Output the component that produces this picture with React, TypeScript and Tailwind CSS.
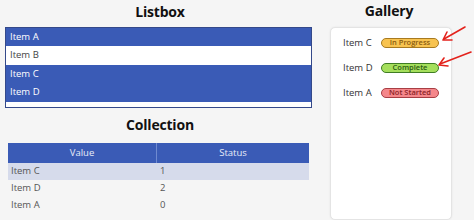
import React from "react";

const listItems = [
  { label: "Item A", sel: true, h: "h-[18px]" },
  { label: "Item B", sel: false, h: "h-[19px]" },
  { label: "Item C", sel: true, h: "h-[18px]" },
  { label: "Item D", sel: true, h: "h-[19px]" },
];

const rows = [
  { v: "Item C", s: "1", bg: "bg-[#d6dbeb]" },
  { v: "Item D", s: "2", bg: "" },
  { v: "Item A", s: "0", bg: "" },
];

const gallery = [
  {
    label: "Item C",
    status: "In Progress",
    cls: "bg-[#f8c350] border-[#a87a20] text-[#8a5c10]",
  },
  {
    label: "Item D",
    status: "Complete",
    cls: "bg-[#a5df5c] border-[#3f7d24] text-[#2c5a12]",
  },
  {
    label: "Item A",
    status: "Not Started",
    cls: "bg-[#f5878b] border-[#a83e44] text-[#8c2327]",
  },
];

export default function App() {
  return (
    <div className="relative w-[474px] h-[220px] overflow-hidden bg-[#f5f5f5] flex font-['Open_Sans',sans-serif]">
      <div className="w-[320px] flex flex-col">
        <div className="h-[27px] pb-[5px] flex items-center justify-center text-[14px] font-bold text-[#111] tracking-[-0.2px]">
          Listbox
        </div>
        <div className="ml-[5px] w-[307px] border border-[#34498a] bg-white flex flex-col">
          {listItems.map((it) => (
            <div
              key={it.label}
              className={`${it.h} flex items-center pl-[4px] text-[9.5px] ${
                it.sel ? "bg-[#3a5bb6] text-white" : "bg-white text-[#444]"
              }`}
            >
              {it.label}
            </div>
          ))}
          <div className="h-[5px] bg-white" />
        </div>
        <div className="h-[35px] pb-[3px] flex items-center justify-center text-[14px] font-bold text-[#111] tracking-[-0.2px]">
          Collection
        </div>
        <div className="ml-[8px] w-[301px] flex flex-col text-[9.5px]">
          <div className="h-[20px] bg-[#3a5bb6] flex text-[#e8ecf8]">
            <div className="w-[149px] flex items-center justify-center border-r border-[#6f8ad0]">
              Value
            </div>
            <div className="flex-1 flex items-center justify-center">Status</div>
          </div>
          {rows.map((r) => (
            <div key={r.v} className={`h-[17px] flex text-[#555] ${r.bg}`}>
              <div className="w-[149px] pl-[3px] flex items-center">{r.v}</div>
              <div className="flex-1 pl-[3px] flex items-center">{r.s}</div>
            </div>
          ))}
        </div>
      </div>
      <div className="w-[154px] flex flex-col">
        <div className="h-[28px] pb-[6px] pr-[16px] flex items-center justify-center text-[14px] font-bold text-[#111] tracking-[-0.2px]">
          Gallery
        </div>
        <div className="ml-[10px] w-[122px] h-[200px] bg-white rounded-[5px] border border-[#e4e4e4] shadow-[0_0_2px_rgba(0,0,0,0.08)] flex flex-col pt-[2px]">
          {gallery.map((g) => (
            <div key={g.label} className="h-[25px] flex items-center">
              <div className="w-[37px] pl-[12px] text-[9.5px] text-[#333] whitespace-nowrap">
                {g.label}
              </div>
              <div
                className={`ml-[13px] w-[58px] h-[10px] rounded-full border flex items-center justify-center text-[7.5px] font-semibold leading-none ${g.cls}`}
              >
                {g.status}
              </div>
            </div>
          ))}
        </div>
      </div>
      <svg
        className="absolute left-0 top-0 pointer-events-none"
        width="474"
        height="220"
        viewBox="0 0 474 220"
      >
        <g stroke="#e3221c" strokeWidth="1.6" fill="none" strokeLinecap="round" strokeLinejoin="round">
          <line x1="465" y1="27" x2="444" y2="39" />
          <polyline points="447,32 443,40 452,40" />
          <line x1="471" y1="52" x2="440" y2="64" />
          <polyline points="444,58 439,65 448,66" />
        </g>
      </svg>
    </div>
  );
}
